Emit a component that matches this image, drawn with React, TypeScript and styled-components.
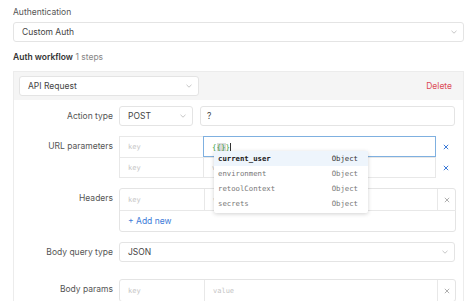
import React from 'react';
import styled, { createGlobalStyle } from 'styled-components';

const GlobalStyle = createGlobalStyle`
  html, body {
    margin: 0;
    padding: 0;
    background: #ffffff;
  }
  body {
    font-family: Inter, "Noto Sans", sans-serif;
    font-size: 8.5px;
    color: #333;
  }
`;

const Page = styled.div`
  width: 474px;
  height: 301px;
  overflow: hidden;
  padding: 6px 10px 0 13px;
  box-sizing: border-box;
`;

const FieldLabel = styled.div`
  height: 12px;
  line-height: 12px;
  margin-bottom: 4px;
  color: #555;
`;

const Select = styled.div<{ $width?: number }>`
  display: flex;
  align-items: center;
  justify-content: space-between;
  box-sizing: border-box;
  height: 20px;
  width: ${(p) => (p.$width ? `${p.$width}px` : '100%')};
  padding: 0 6px 0 8px;
  border: 1px solid #e4e4e4;
  border-radius: 3px;
  background: #fff;
  color: #444;
`;

const Chevron = () => (
  <svg width="6" height="4" viewBox="0 0 6 4">
    <path d="M0.5 0.8 L3 3.2 L5.5 0.8" fill="none" stroke="#b8b8b8" strokeWidth="0.8" />
  </svg>
);

const WorkflowTitle = styled.div`
  margin: 9px 0 8px;
  height: 12px;
  line-height: 12px;
  color: #333;

  b {
    font-weight: 600;
  }

  span {
    color: #888;
  }
`;

const Panel = styled.div`
  border: 1px solid #ececec;
  border-bottom: none;
  width: 451px;
  box-sizing: border-box;
`;

const PanelHeader = styled.div`
  display: flex;
  align-items: center;
  justify-content: space-between;
  height: 28px;
  padding: 0 11px 0 5px;
  background: #f5f5f5;
`;

const DeleteLink = styled.span`
  color: #dc4b55;
`;

const PanelBody = styled.div`
  position: relative;
  padding: 6px 8px 0 0;
  display: flex;
  flex-direction: column;
`;

const FormRow = styled.div<{ $gap: number }>`
  display: grid;
  grid-template-columns: 99px 1fr;
  column-gap: 6px;
  margin-bottom: ${(p) => p.$gap}px;
`;

const RowLabel = styled.div`
  text-align: right;
  line-height: 21px;
  color: #555;
`;

const Inline = styled.div`
  display: flex;
  gap: 7px;
`;

const TextInput = styled.div`
  flex: 1;
  box-sizing: border-box;
  height: 20px;
  line-height: 18px;
  padding: 0 6px;
  border: 1px solid #e4e4e4;
  border-radius: 3px;
  color: #444;
`;

const KvTable = styled.div<{ $bordered: boolean }>`
  display: grid;
  grid-template-columns: 84px 233px 19px;
  ${(p) =>
    p.$bordered
      ? `border: 1px solid #e4e4e4; border-radius: 3px; width: 337px; box-sizing: border-box;`
      : ''}
`;

const KvCell = styled.div<{ $focus?: boolean; $first?: boolean; $edge?: boolean }>`
  box-sizing: border-box;
  height: 21px;
  display: flex;
  align-items: center;
  padding: 0 8px;
  font-family: "DejaVu Sans Mono", "Liberation Mono", monospace;
  font-size: 7px;
  color: #c4c4c4;
  border-top: ${(p) => (p.$first ? 'none' : '1px solid #e8e8e8')};
  border-left: ${(p) => (p.$edge ? 'none' : '1px solid #e8e8e8')};
  ${(p) => (p.$focus ? 'outline: 1px solid #7fb0e0; outline-offset: -1px; background:#fff;' : '')}
`;

const OpenCell = styled(KvCell)<{ $closeRight?: boolean; $bottom?: boolean }>`
  border-left: 1px solid #e8e8e8;
  border-right: ${(p) => (p.$closeRight ? '1px solid #e8e8e8' : 'none')};
  border-bottom: ${(p) => (p.$bottom ? '1px solid #e8e8e8' : 'none')};
`;

const RemoveCell = styled.div<{ $first?: boolean; $bordered?: boolean }>`
  display: flex;
  align-items: center;
  justify-content: center;
  height: 21px;
  box-sizing: border-box;
  border-left: ${(p) => (p.$bordered ? '1px solid #e8e8e8' : 'none')};
  border-top: ${(p) => (p.$bordered && !p.$first ? '1px solid #e8e8e8' : 'none')};
`;

const Cross = ({ color }: { color: string }) => (
  <svg width="6" height="6" viewBox="0 0 6 6">
    <path d="M0.8 0.8 L5.2 5.2 M5.2 0.8 L0.8 5.2" stroke={color} strokeWidth="1" />
  </svg>
);

const AddNew = styled.div`
  grid-column: 1 / 4;
  height: 20px;
  line-height: 20px;
  border-top: 1px solid #e8e8e8;
  padding-left: 8px;
  color: #3c7bd8;
`;

const Braces = styled.span`
  font-family: "DejaVu Sans Mono", "Liberation Mono", monospace;
  font-size: 7.5px;
  color: #3e9e3e;

  i {
    font-style: normal;
    background: #dcdcdc;
  }
`;

const Caret = styled.span`
  display: inline-block;
  width: 1px;
  height: 9px;
  background: #333;
  vertical-align: middle;
`;

const Suggestions = styled.div`
  position: absolute;
  left: 200px;
  top: 51px;
  width: 154px;
  padding: 0 0 2px;
  background: #fff;
  border-radius: 2px;
  box-shadow: 0 1px 4px rgba(0, 0, 0, 0.18);
  z-index: 5;
`;

const Suggestion = styled.div<{ $active?: boolean }>`
  display: flex;
  justify-content: space-between;
  height: 15px;
  line-height: 15px;
  padding: 0 10px 0 4px;
  font-family: "DejaVu Sans Mono", "Liberation Mono", monospace;
  font-size: 7.3px;
  color: ${(p) => (p.$active ? '#222' : '#777')};
  font-weight: ${(p) => (p.$active ? 700 : 400)};
  background: ${(p) => (p.$active ? '#eef5fc' : '#fff')};

  span:last-child {
    font-weight: 400;
    color: ${(p) => (p.$active ? '#333' : '#777')};
  }
`;

const suggestions = ['current_user', 'environment', 'retoolContext', 'secrets'];

export default function App() {
  return (
    <Page>
      <GlobalStyle />
      <FieldLabel>Authentication</FieldLabel>
      <Select>
        Custom Auth
        <Chevron />
      </Select>
      <WorkflowTitle>
        <b>Auth workflow</b> <span>1 steps</span>
      </WorkflowTitle>
      <Panel>
        <PanelHeader>
          <Select $width={180}>
            API Request
            <Chevron />
          </Select>
          <DeleteLink>Delete</DeleteLink>
        </PanelHeader>
        <PanelBody>
          <FormRow $gap={9}>
            <RowLabel>Action type</RowLabel>
            <Inline>
              <Select $width={74}>
                POST
                <Chevron />
              </Select>
              <TextInput>?</TextInput>
            </Inline>
          </FormRow>

          <FormRow $gap={10}>
            <RowLabel>URL parameters</RowLabel>
            <KvTable $bordered={false}>
              <OpenCell>key</OpenCell>
              <KvCell $focus>
                <Braces>
                  {'{'}
                  <i>{'{}'}</i>
                  {'}'}
                </Braces>
                <Caret />
              </KvCell>
              <RemoveCell>
                <Cross color="#3c7bd8" />
              </RemoveCell>
              <OpenCell $bottom>key</OpenCell>
              <OpenCell $bottom $closeRight>value</OpenCell>
              <RemoveCell>
                <Cross color="#3c7bd8" />
              </RemoveCell>
            </KvTable>
          </FormRow>

          <FormRow $gap={10}>
            <RowLabel>Headers</RowLabel>
            <KvTable $bordered>
              <KvCell $first $edge>key</KvCell>
              <KvCell $first>value</KvCell>
              <RemoveCell $bordered $first>
                <Cross color="#b0b0b0" />
              </RemoveCell>
              <AddNew>+ Add new</AddNew>
            </KvTable>
          </FormRow>

          <FormRow $gap={16}>
            <RowLabel>Body query type</RowLabel>
            <Select>
              JSON
              <Chevron />
            </Select>
          </FormRow>

          <FormRow $gap={0}>
            <RowLabel>Body params</RowLabel>
            <KvTable $bordered>
              <KvCell $first $edge>key</KvCell>
              <KvCell $first>value</KvCell>
              <RemoveCell $bordered $first>
                <Cross color="#b0b0b0" />
              </RemoveCell>
            </KvTable>
          </FormRow>

          <Suggestions>
            {suggestions.map((s, i) => (
              <Suggestion key={s} $active={i === 0}>
                <span>{s}</span>
                <span>Object</span>
              </Suggestion>
            ))}
          </Suggestions>
        </PanelBody>
      </Panel>
    </Page>
  );
}
